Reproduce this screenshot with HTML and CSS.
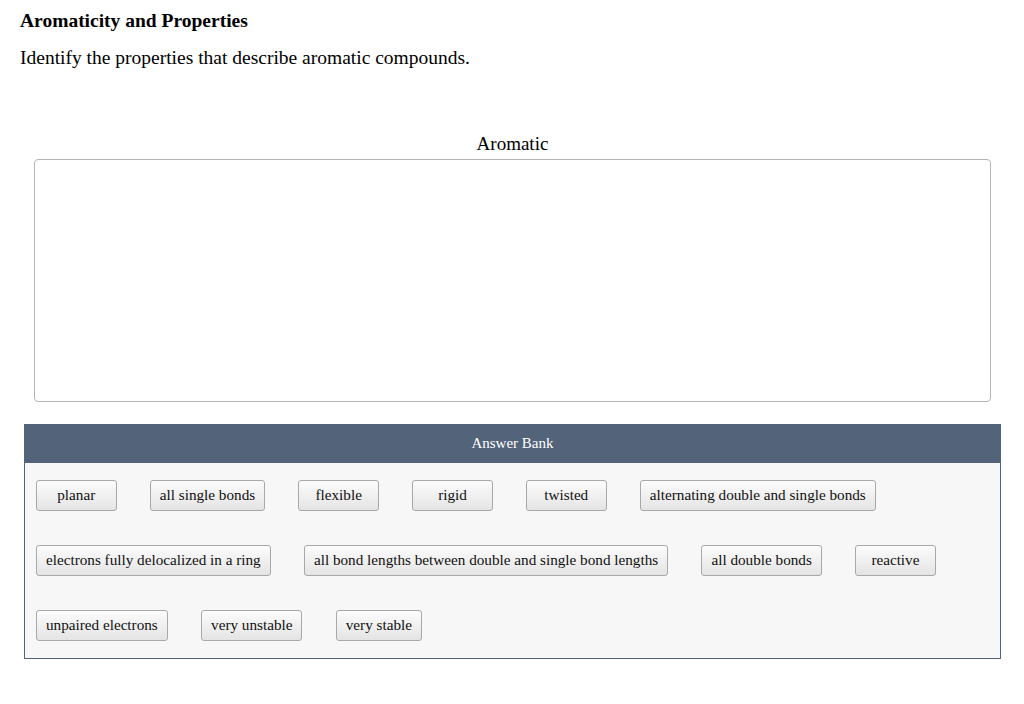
FILE: index.html
```html
<!DOCTYPE html>
<html>
<head>
<meta charset="utf-8">
<link rel="stylesheet" href="styles.css">
</head>
<body>
<div class="page">
  <h1 class="title">Aromaticity and Properties</h1>
  <p class="prompt">Identify the properties that describe aromatic compounds.</p>
  <div class="target">
    <div class="target-label">Aromatic</div>
    <div class="drop-box"></div>
  </div>
  <div class="bank">
    <div class="bank-header">Answer Bank</div>
    <div class="bank-body">
      <div class="chip">planar</div>
      <div class="chip">all single bonds</div>
      <div class="chip">flexible</div>
      <div class="chip">rigid</div>
      <div class="chip">twisted</div>
      <div class="chip">alternating double and single bonds</div>
      <div class="chip">electrons fully delocalized in a ring</div>
      <div class="chip">all bond lengths between double and single bond lengths</div>
      <div class="chip">all double bonds</div>
      <div class="chip">reactive</div>
      <div class="chip">unpaired electrons</div>
      <div class="chip">very unstable</div>
      <div class="chip">very stable</div>
    </div>
  </div>
</div>
</body>
</html>
```
FILE: styles.css
```css
html, body {
  margin: 0;
  padding: 0;
  background: #ffffff;
}
body {
  font-family: "Liberation Serif", "Times New Roman", serif;
  color: #000;
}
.page {
  padding: 10px 20px 0 20px;
}
.title {
  font-size: 19.5px;
  font-weight: bold;
  margin: 0;
  line-height: 22px;
}
.prompt {
  font-size: 19.5px;
  margin: 14px 0 0 0;
  line-height: 23px;
}
.target {
  margin: 64px 13px 0 14px;
  display: flex;
  flex-direction: column;
  align-items: center;
}
.target-label {
  font-size: 19px;
  line-height: 22px;
  margin-bottom: 4px;
}
.drop-box {
  align-self: stretch;
  height: 241px;
  border: 1px solid #b5b5b5;
  border-radius: 4px;
  background: #fff;
}
.bank {
  margin: 22px 3px 0 4px;
  border: 1px solid #53637a;
  border-top: none;
}
.bank-header {
  background: #53637a;
  color: #fff;
  font-size: 15px;
  text-align: center;
  height: 39px;
  line-height: 38px;
}
.bank-body {
  background: #f7f7f7;
  display: flex;
  flex-wrap: wrap;
  column-gap: 33.3px;
  row-gap: 34px;
  padding: 17px 11px 17px 11px;
}
.chip {
  box-sizing: border-box;
  min-width: 80.5px;
  height: 31px;
  padding: 0 9px;
  font-size: 15.2px;
  line-height: 27px;
  text-align: center;
  border: 1px solid #a8a8a8;
  border-radius: 3px;
  background: linear-gradient(#fcfcfc, #e4e4e4);
  color: #111;
}
```
